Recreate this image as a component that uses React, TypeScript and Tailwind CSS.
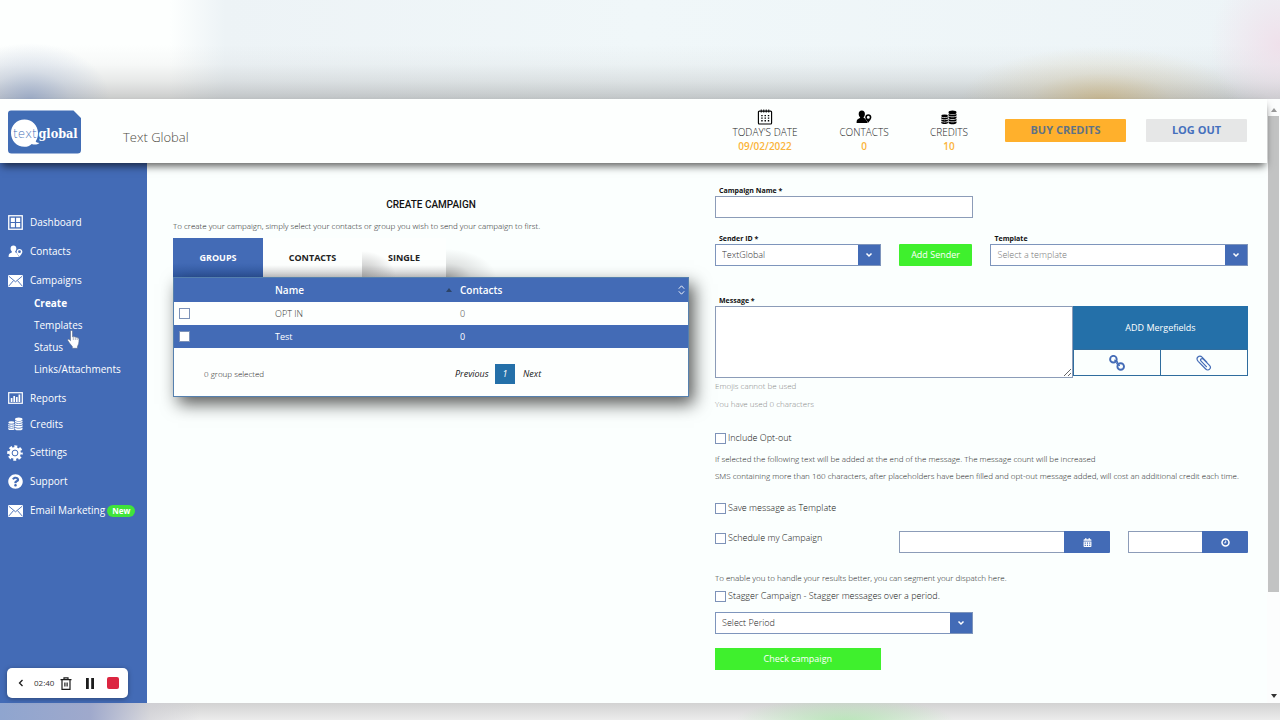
import React from "react";
import { FaQuestionCircle, FaCalendarAlt } from "react-icons/fa";

type IconProps = { className?: string };

function DashboardIcon({ className }: IconProps) {
  return (
    <svg viewBox="0 0 15 15" className={className} fill="none" aria-hidden="true">
      <rect x="0.75" y="0.75" width="13.5" height="13.5" stroke="currentColor" strokeWidth="1.3" />
      <path d="M2.8 2.8h4.100v4.100h-4.100zM8.100 2.800h4.100v4.100h-4.100zM2.800 8.100h4.100v4.100h-4.100zM8.100 8.100h4.100v4.100h-4.100z" fill="currentColor" />
    </svg>
  );
}

function ContactsIcon({ className }: IconProps) {
  return (
    <svg viewBox="0 0 16 14" className={className} fill="currentColor" aria-hidden="true">
      <path d="M5.8.6c2 0 3.1 1.4 3.1 3.3 0 1.4-.6 2.7-1.4 3.4.2.7.8 1 1.700 1.400l2.300 3.400v.9H.6c0-2.400.3-3.400 1.600-4 1.100-.5 1.900-.8 2-1.700-.9-.7-1.500-2-1.500-3.400C2.700 2 3.800.6 5.800.6z" />
      <path
        fillRule="evenodd"
        d="M12.300 4.200c1.800 0 3.100 1.300 3.100 3 0 1.900-1.700 3.300-3.100 5.500-1.400-2.200-3.100-3.600-3.100-5.500 0-1.700 1.300-3 3.100-3zm0 1.500a1.500 1.500 0 1 0 0 3 1.500 1.500 0 0 0 0-3z"
      />
    </svg>
  );
}

function EnvelopeIcon({ className }: IconProps) {
  return (
    <svg viewBox="0 0 15 12" className={className} fill="none" aria-hidden="true">
      <rect width="15" height="12" rx="1" fill="currentColor" />
      <path d="M0.800 1.200l6.700 5.600 6.700-5.600M0.800 11l4.700-5.400M14.200 11L9.500 5.600" stroke="#436bb6" strokeWidth="0.9" />
    </svg>
  );
}

function ReportsIcon({ className }: IconProps) {
  return (
    <svg viewBox="0 0 15 12" className={className} fill="none" aria-hidden="true">
      <rect x="0.7" y="0.700" width="13.600" height="10.600" stroke="currentColor" strokeWidth="1.200" />
      <path d="M3.600 10V6M6.200 10V4M8.800 10V5M11.400 10V2.600" stroke="currentColor" strokeWidth="1.700" />
    </svg>
  );
}

function CoinsIcon({ className }: IconProps) {
  return (
    <svg viewBox="0 0 16 15" className={className} fill="currentColor" aria-hidden="true">
      <ellipse cx="11.500" cy="2.400" rx="4" ry="1.900" />
      <path d="M7.500 3.700c1 1.400 7 1.400 8 0v1.700c-1 1.600-7 1.600-8 0zM7.500 6.200c1 1.400 7 1.400 8 0v1.700c-1 1.600-7 1.600-8 0zM7.500 8.700c1 1.400 7 1.400 8 0v1.700c-1 1.600-7 1.600-8 0zM7.500 11.200c1 1.400 7 1.400 8 0v1.800c-1 1.700-7 1.700-8 0z" />
      <ellipse cx="3.600" cy="5.900" rx="3.300" ry="1.400" />
      <path d="M.3 7.100c1 1.200 5.600 1.200 6.600 0v1.500c-1 1.300-5.600 1.300-6.600 0zM.3 9.300c1 1.200 5.600 1.200 6.600 0v1.500c-1 1.300-5.600 1.300-6.600 0zM.3 11.500c1 1.200 5.600 1.200 6.600 0v1.500c-1 1.300-5.600 1.300-6.600 0z" />
    </svg>
  );
}

function GearIcon({ className }: IconProps) {
  return (
    <svg viewBox="0 0 16 16" className={className} fill="none" aria-hidden="true">
      <circle cx="8" cy="8" r="6.500" stroke="currentColor" strokeWidth="2.600" strokeDasharray="2.900 2.205" strokeDashoffset="1.450" />
      <circle cx="8" cy="8" r="5.900" fill="currentColor" />
      <circle cx="8" cy="8" r="2.900" stroke="#436bb6" strokeWidth="1" />
    </svg>
  );
}

function PlannerIcon({ className }: IconProps) {
  return (
    <svg viewBox="0 0 16 17" className={className} fill="none" stroke="currentColor" aria-hidden="true">
      <rect x="1" y="2.200" width="14" height="13.800" rx="1" strokeWidth="1.200" />
      <path d="M4 .5v3.300M6.700 .5v3.300M9.300 .5v3.300M12 .5v3.300" strokeWidth="1" />
      <path d="M4 7h8.500M4 9.700h8.500M4 12.400h8.500" strokeWidth="1.500" strokeDasharray="1.500 2" />
    </svg>
  );
}

function ClockIcon({ className }: IconProps) {
  return (
    <svg viewBox="0 0 10 10" className={className} fill="none" stroke="currentColor" aria-hidden="true">
      <circle cx="5" cy="5" r="3.900" strokeWidth="1.700" />
      <path d="M5.200 2.800v2.500H3.500" strokeWidth="1" />
    </svg>
  );
}

function ChainIcon({ className }: IconProps) {
  return (
    <svg viewBox="0 0 16 16" className={className} fill="none" stroke="currentColor" aria-hidden="true">
      <circle cx="4.400" cy="4.200" r="3.300" strokeWidth="1.900" />
      <circle cx="11.700" cy="11.500" r="3.300" strokeWidth="1.900" />
      <path d="M5.300 5.100c2 .3 3.300 1.200 3.600 3.300M7.300 7.500c.5 1.800 1.800 2.900 3.600 3.200" strokeWidth="1.200" />
    </svg>
  );
}

function ClipIcon({ className }: IconProps) {
  return (
    <svg viewBox="0 0 16 16" className={className} fill="none" stroke="currentColor" strokeLinecap="round" aria-hidden="true">
      <path
        d="M10.800 7.200L6.300 2.300C4.900 .9 3 .9 1.900 2s-1 2.900.3 4.300l7.500 7.700c1.200 1.200 2.900 1.200 3.900.2s1-2.600-.1-3.800L7.200 4.100c-.7-.7-1.600-.7-2.200-.1s-.6 1.500.1 2.200l5.300 5.500"
        strokeWidth="1.200"
      />
    </svg>
  );
}

function ChevronDown({ className }: IconProps) {
  return (
    <svg viewBox="0 0 8 6" className={className} fill="none" stroke="currentColor" strokeWidth="1.500" aria-hidden="true">
      <path d="M1.500 1.500L4 4l2.500-2.500" />
    </svg>
  );
}

function Logo() {
  return (
    <svg viewBox="0 0 73 44" className="h-[44px] w-[73px]" role="img" aria-label="textglobal">
      <path d="M3 0.500H65.500L73 8V40a3.500 3.500 0 0 1-3.500 3.500H3.500A3.500 3.500 0 0 1 0 40V3.500A3 3 0 0 1 3 .5z" fill="#416db5" />
      <path d="M16.500 9.500c7.700 0 13.500 6 13.500 13.500 0 3.900-1 6.500-2.300 8.300.5 1 1.700 1.600 3.700 1.700-2.200 1.800-5.200 1.900-7.700.9-2 1.900-4.600 2.900-7.200 2.900C8.600 36.800 3 30.600 3 23S8.600 9.500 16.500 9.500z" fill="#fff" />
      <text x="5" y="27.500" fontFamily="'DejaVu Sans', sans-serif" fontWeight="200" fontSize="12" fill="#416db5">
        text
      </text>
      <text x="30.500" y="27.500" fontFamily="'DejaVu Serif Condensed', 'DejaVu Serif', serif" fontWeight="700" fontStretch="condensed" fontSize="12.500" fill="#fff">
        global
      </text>
    </svg>
  );
}

type Stat = { label: string; value: string; icon: React.ReactNode; width: string };

const stats: Stat[] = [
  { label: "TODAY'S DATE", value: "09/02/2022", icon: <PlannerIcon className="h-4 w-4" />, width: "w-[110px]" },
  { label: "CONTACTS", value: "0", icon: <ContactsIcon className="h-[14px] w-4" />, width: "w-[88px]" },
  { label: "CREDITS", value: "10", icon: <CoinsIcon className="h-[15px] w-4" />, width: "w-[82px]" },
];

function Header() {
  return (
    <header className="relative z-10 flex h-16 items-center bg-[#fdfffe] pl-2 pr-5 shadow-[0_5px_8px_-2px_rgba(0,0,0,0.65)]">
      <a href="#home" className="mt-0.5">
        <Logo />
      </a>
      <h1 className="ml-[42px] mt-3 text-[13px] font-light leading-5 text-[#4d4a3f]">Text Global</h1>
      <dl className="ml-auto mr-[15px] flex">
        {stats.map((s) => (
          <div key={s.label} className={`flex flex-col items-center ${s.width}`}>
            <div className="flex h-4 items-center justify-center text-black">{s.icon}</div>
            <dt className="whitespace-nowrap text-[10px] font-light leading-[14px] text-[#222]">{s.label}</dt>
            <dd className="text-[10px] font-semibold leading-[14px] text-[#fbb43a]">{s.value}</dd>
          </div>
        ))}
      </dl>
      <div className="mb-0.5 flex gap-5">
        <button className="h-[23px] w-[121px] rounded-[1px] bg-[#ffb02c] text-[11px] font-bold text-[#5f7385]">BUY CREDITS</button>
        <button className="h-[23px] w-[101px] rounded-[1px] bg-[#e6e7e7] text-[11px] font-bold text-[#4570bd]">LOG OUT</button>
      </div>
    </header>
  );
}

type NavItem = { label: string; icon: React.ReactNode; height: string; badge?: string; sub?: string[] };

const nav: NavItem[] = [
  { label: "Dashboard", icon: <DashboardIcon className="size-[15px]" />, height: "h-[29px]" },
  { label: "Contacts", icon: <ContactsIcon className="h-[13px] w-[15px]" />, height: "h-[29px]" },
  {
    label: "Campaigns",
    icon: <EnvelopeIcon className="h-3 w-[15px]" />,
    height: "h-[29px]",
    sub: ["Create", "Templates", "Status", "Links/Attachments"],
  },
  { label: "Reports", icon: <ReportsIcon className="h-3 w-[15px]" />, height: "h-[24px]" },
  { label: "Credits", icon: <CoinsIcon className="h-[14px] w-[15px]" />, height: "h-[28px]" },
  { label: "Settings", icon: <GearIcon className="size-4" />, height: "h-[29px]" },
  { label: "Support", icon: <FaQuestionCircle className="size-[15px]" />, height: "h-[29px]" },
  { label: "Email Marketing", icon: <EnvelopeIcon className="h-3 w-[15px]" />, height: "h-[29px]", badge: "New" },
];

function Sidebar() {
  return (
    <nav className="w-[147px] shrink-0 bg-[#436bb6] pt-[45px] text-[10px] text-white">
      <ul>
        {nav.map((item) => (
          <li key={item.label}>
            <a href={`#${item.label}`} className={`flex items-center pl-[7px] ${item.height}`}>
              <span className="flex w-4 justify-center">{item.icon}</span>
              <span className="ml-[7px] whitespace-nowrap">{item.label}</span>
              {item.badge && (
                <span className="ml-[2px] rounded-full bg-[#3fe43a] px-[5px] text-[8px] font-bold leading-3">{item.badge}</span>
              )}
            </a>
            {item.sub && (
              <ul className="-mt-[3px] mb-[6px]">
                {item.sub.map((s) => (
                  <li key={s}>
                    <a href={`#${s}`} className={`flex h-[22px] items-center pl-[34px] ${s === "Create" ? "font-bold" : ""}`}>
                      {s}
                    </a>
                  </li>
                ))}
              </ul>
            )}
          </li>
        ))}
      </ul>
    </nav>
  );
}

function Check({ id }: { id: string }) {
  return (
    <input
      id={id}
      type="checkbox"
      className="block size-[11px] shrink-0 appearance-none border border-[#7d92b8] bg-white checked:bg-[#436bb6]"
    />
  );
}

const groups = [
  { name: "OPT IN", contacts: 0, active: false },
  { name: "Test", contacts: 0, active: true },
];

function GroupsPanel() {
  return (
    <section>
      <h2 className="mt-[35px] text-center font-['Roboto',sans-serif] text-[10px] font-medium leading-[14px] text-[#111]">
        CREATE CAMPAIGN
      </h2>
      <p className="mt-2 whitespace-nowrap text-[8px] font-light leading-3 text-[#222]">
        To create your campaign, simply select your contacts or group you wish to send your campaign to first.
      </p>
      <div role="tablist" className="mt-[6px] flex h-[39px] text-[9px] font-bold text-[#222]">
        <button role="tab" aria-selected="true" className="w-[90px] bg-[linear-gradient(to_top,#2f57a0,#436bb6_14px)] text-white">
          GROUPS
        </button>
        <button
          role="tab"
          aria-selected="false"
          className="w-[99px] bg-[linear-gradient(to_top,#d4d4d5,#fdfffe_12px)]"
        >
          CONTACTS
        </button>
        <button
          role="tab"
          aria-selected="false"
          className="w-[84px] bg-[radial-gradient(ellipse_34px_26px_at_0%_100%,#b5b5b5,transparent),linear-gradient(to_top,#d4d4d5,#fdfffe_12px)]"
        >
          SINGLE
        </button>
        <span className="flex-1 bg-[radial-gradient(ellipse_50px_28px_at_0%_100%,rgba(140,140,140,0.7),rgba(170,170,170,0.3)_50%,transparent)]" />
      </div>
      <div className="relative border border-[#5580ae] bg-[#fdfffe] shadow-[5px_7px_16px_rgba(0,0,0,0.65)]">
        <table className="w-full table-fixed text-left">
          <colgroup>
            <col className="w-[101px]" />
            <col />
            <col className="w-[228px]" />
          </colgroup>
          <thead>
            <tr className="h-[24px] bg-[#436bb6] text-[10px] text-white">
              <th aria-label="Select" />
              <th className="font-semibold">
                <div className="flex items-center justify-between pr-[8px]">
                  Name
                  <svg viewBox="0 0 6 4" className="h-1 w-1.5" fill="#2c4468" aria-hidden="true">
                    <path d="M0 4l3-4 3 4z" />
                  </svg>
                </div>
              </th>
              <th className="font-semibold">
                <div className="flex items-center justify-between pr-[3px]">
                  Contacts
                  <svg viewBox="0 0 7 10" className="h-[10px] w-[7px]" fill="none" stroke="#fff" strokeWidth="0.9" aria-hidden="true">
                    <path d="M.8 3.700l2.700-2.900 2.700 2.900M.8 6.300l2.700 2.900 2.700-2.900" />
                  </svg>
                </div>
              </th>
            </tr>
          </thead>
          <tbody>
            {groups.map((g) => (
              <tr
                key={g.name}
                className={
                  g.active ? "h-[23px] bg-[#436bb6] text-[9px] text-white" : "h-[23px] text-[9px] font-light text-[#333]"
                }
              >
                <td className="pl-[5px]">
                  <Check id={`group-${g.name}`} />
                </td>
                <td>
                  <label htmlFor={`group-${g.name}`}>{g.name}</label>
                </td>
                <td>{g.contacts}</td>
              </tr>
            ))}
          </tbody>
        </table>
        <div className="flex h-[48px] items-center pl-[30px] pt-1 text-[#222]">
          <span className="w-[251px] text-[8px] font-light">0 group selected</span>
          <div className="flex items-center gap-2 text-[9px] italic">
            <button className="w-8">Previous</button>
            <button className="size-5 bg-[#2470a9] text-[9px] italic text-white">1</button>
            <button>Next</button>
          </div>
        </div>
      </div>
    </section>
  );
}

function SelectBox({ id, value, className = "" }: { id: string; value: string; className?: string }) {
  return (
    <div className="relative">
      <select
        id={id}
        aria-label={value}
        className={`block h-[22px] w-full appearance-none border border-[#7e95bc] bg-white pl-[6px] text-[9px] font-light ${className}`}
      >
        <option>{value}</option>
      </select>
      <span className="pointer-events-none absolute inset-y-px right-px flex w-[22px] items-center justify-center bg-[#436bb6] text-white">
        <ChevronDown className="h-1.5 w-2" />
      </span>
    </div>
  );
}

function FieldLabel({ htmlFor, children }: { htmlFor: string; children: React.ReactNode }) {
  return (
    <label htmlFor={htmlFor} className="block pl-[4px] pt-0.5 text-[7px] font-bold leading-[10px] text-[#111]">
      {children}
    </label>
  );
}

function CheckLine({ id, children }: { id: string; children: React.ReactNode }) {
  return (
    <div className="flex h-[14px] items-center gap-[2px] text-[9px] font-light text-[#111]">
      <Check id={id} />
      <label htmlFor={id} className="whitespace-nowrap">
        {children}
      </label>
    </div>
  );
}

function CampaignForm() {
  return (
    <form className="pt-[21px]" onSubmit={(e) => e.preventDefault()}>
      <div className="grid grid-cols-12 items-end gap-x-[18px]">
        <div className="col-span-6">
          <FieldLabel htmlFor="campaign-name">Campaign Name *</FieldLabel>
          <input id="campaign-name" className="block h-[22px] w-full border border-[#8c9cb8] bg-white px-1.5 text-[9px]" />
        </div>
      </div>
      <div className="mt-[14px] grid grid-cols-12 items-end gap-x-[18px]">
        <div className="col-span-4">
          <FieldLabel htmlFor="sender">Sender ID *</FieldLabel>
          <SelectBox id="sender" value="TextGlobal" className="text-[#333]" />
        </div>
        <button type="button" className="col-span-2 h-[22px] rounded-[1px] bg-[#3ff02d] text-[9px] text-white">
          Add Sender
        </button>
        <div className="col-span-6">
          <FieldLabel htmlFor="template">Template</FieldLabel>
          <SelectBox id="template" value="Select a template" className="text-[#777]" />
        </div>
      </div>

      <div className="mt-[28px]">
        <FieldLabel htmlFor="message">Message *</FieldLabel>
        <div className="flex items-start">
          <textarea id="message" className="block h-[72px] min-w-0 flex-1 border border-[#8c9cb8] bg-white p-1.5 text-[9px]" />
          <div className="w-[175px]">
            <button type="button" className="block h-[43px] w-full bg-[#2470a9] text-[9px] text-white">
              ADD Mergefields
            </button>
            <div className="grid grid-cols-2 text-[#436bb6]">
              <button
                type="button"
                aria-label="Add link"
                className="flex h-[27px] items-center justify-center border border-[#2f6d9e]"
              >
                <ChainIcon className="size-4" />
              </button>
              <button
                type="button"
                aria-label="Add attachment"
                className="flex h-[27px] items-center justify-center border border-l-0 border-[#2f6d9e]"
              >
                <ClipIcon className="size-4" />
              </button>
            </div>
          </div>
        </div>
      </div>
      <div className="mt-[2px] text-[8px] font-light leading-3 text-[#888]">
        <p>Emojis cannot be used</p>
        <p className="mt-[6px]">You have used 0 characters</p>
      </div>

      <div className="mt-[21px]">
        <CheckLine id="opt-out">Include Opt-out</CheckLine>
      </div>
      <div className="mt-2 whitespace-nowrap text-[8px] font-light leading-3 text-[#222]">
        <p>If selected the following text will be added at the end of the message. The message count will be increased</p>
        <p className="mt-[5px]">
          SMS containing more than 160 characters, after placeholders have been filled and opt-out message added, will cost an
          additional credit each time.
        </p>
      </div>

      <div className="mt-[19px]">
        <CheckLine id="save-template">Save message as Template</CheckLine>
      </div>
      <div className="mt-4 grid grid-cols-12 gap-x-[18px]">
        <div className="col-span-4">
          <CheckLine id="schedule">Schedule my Campaign</CheckLine>
        </div>
        <div className="col-span-5 flex">
          <input aria-label="Date" className="h-[22px] min-w-0 flex-1 border border-r-0 border-[#8c9cb8] bg-white px-1.5 text-[9px]" />
          <button
            type="button"
            aria-label="Pick date"
            className="flex h-[22px] w-[46px] items-center justify-center rounded-r-[1px] bg-[#436bb6] text-white"
          >
            <FaCalendarAlt className="size-[9px]" />
          </button>
        </div>
        <div className="col-span-3 flex">
          <input aria-label="Time" className="h-[22px] min-w-0 flex-1 border border-r-0 border-[#8c9cb8] bg-white px-1.5 text-[9px]" />
          <button
            type="button"
            aria-label="Pick time"
            className="flex h-[22px] w-[46px] items-center justify-center rounded-r-[1px] bg-[#436bb6] text-white"
          >
            <ClockIcon className="size-[9px]" />
          </button>
        </div>
      </div>

      <p className="mt-[19px] whitespace-nowrap text-[8px] font-light leading-3 text-[#222]">
        To enable you to handle your results better, you can segment your dispatch here.
      </p>
      <div className="mt-[5px]">
        <CheckLine id="stagger">Stagger Campaign - Stagger messages over a period.</CheckLine>
      </div>
      <div className="mt-[9px] grid grid-cols-12 gap-x-[18px]">
        <div className="col-span-6">
          <SelectBox id="period" value="Select Period" className="text-[#222]" />
        </div>
      </div>
      <div className="mt-[14px] grid grid-cols-12 gap-x-[18px]">
        <button type="submit" className="col-span-4 h-[22px] bg-[#3ff02d] text-[9px] text-white">
          Check campaign
        </button>
      </div>
    </form>
  );
}

function Scrollbar() {
  return (
    <div className="flex w-[13px] shrink-0 flex-col items-center bg-[#fcfdfd]" aria-hidden="true">
      <svg viewBox="0 0 6 4" className="mb-1 mt-[9px] h-[4px] w-1.5 shrink-0" fill="#999">
        <path d="M0 4l3-4 3 4z" />
      </svg>
      <div className="w-[11px] flex-[475] bg-[#c2c3c3]" />
      <div className="flex-[102]" />
      <svg viewBox="0 0 6 4" className="mb-[5px] h-[4px] w-1.5 shrink-0" fill="#333">
        <path d="M0 0l3 4 3-4z" />
      </svg>
    </div>
  );
}

function RecorderBar() {
  return (
    <div className="absolute bottom-[5px] left-[7px] z-20 flex h-[30px] w-[121px] items-center rounded-[5px] bg-white text-[#1c1c1c] shadow-[0_1px_5px_rgba(0,0,0,0.35)]">
      <button aria-label="Back" className="ml-[11px]">
        <svg viewBox="0 0 6 8" className="block h-2 w-1.5" fill="none" stroke="currentColor" strokeWidth="1.300">
          <path d="M4.500 1L1.500 4l3 3" />
        </svg>
      </button>
      <span className="ml-[10px] w-[20px] whitespace-nowrap text-[8px] text-[#333]">02:40</span>
      <button aria-label="Delete recording" className="ml-[6px]">
        <svg viewBox="0 0 12 13" className="block h-[13px] w-3" fill="none" stroke="currentColor" strokeWidth="1.200">
          <path d="M.5 2.700h11M4 2.500V.8h4v1.700M2 2.700v9.600h8V2.700M4.900 5.500v4M7.100 5.500v4" />
        </svg>
      </button>
      <button aria-label="Pause" className="ml-[14px]">
        <svg viewBox="0 0 8 11" className="block h-[11px] w-2" fill="currentColor">
          <path d="M0 0h2.800v11H0zM5.200 0H8v11H5.200z" />
        </svg>
      </button>
      <button aria-label="Stop" className="ml-[13px] size-3 rounded-[2px] bg-[#dc2540]" />
    </div>
  );
}

function HandCursor() {
  return (
    <svg viewBox="0 0 13 20" className="pointer-events-none absolute left-[67px] top-[231px] z-20 h-5 w-[13px]" aria-hidden="true">
      <path
        d="M3.500 1.500c0-1.300 2-1.300 2 0v5.300l1.200-.3 1.800.5 1.800.5c1.200.2 1.700 1 1.700 2.200 0 3-.4 4.800-1.500 6.600v2H5.300v-1.800C3.600 14.800 2 12.300.8 10.600c-.6-1.200.6-1.900 1.500-1.100l1.200 1.200z"
        fill="#fff"
        stroke="#5a6a88"
        strokeWidth="0.600"
      />
      <path d="M6.300 7v3M8.300 7.300v2.700M10.200 7.700v2.300" stroke="#5a6a88" strokeWidth="0.500" />
    </svg>
  );
}

export default function App() {
  return (
    <div className="flex min-h-screen flex-col font-['Open_Sans',sans-serif]">
      <div className="h-[99px] shrink-0 bg-[radial-gradient(ellipse_80px_56px_at_30px_99px,rgba(125,148,192,0.6),rgba(125,148,192,0.22)_50%,transparent),radial-gradient(ellipse_140px_52px_at_86%_100%,rgba(200,165,90,0.5),rgba(205,175,110,0.18)_50%,transparent),radial-gradient(ellipse_70px_80px_at_100%_45%,rgba(240,220,232,0.8),transparent),linear-gradient(to_bottom,transparent_45%,rgba(150,150,150,0.06)_65%,rgba(130,130,130,0.18)_82%,rgba(110,110,110,0.35)),linear-gradient(to_right,#fdfffe_170px,#edf3f6_225px,#f0f7f9_50%,#edf4f7)]" />
      <div className="relative flex flex-1">
        <div className="flex min-w-0 flex-1 flex-col">
          <Header />
          <div className="flex flex-1 bg-[#fbfffe]">
            <Sidebar />
            <main className="grid min-w-0 flex-1 grid-cols-[516fr_533fr] items-start gap-x-[26px] pl-[26px] pr-[19px]">
              <GroupsPanel />
              <CampaignForm />
            </main>
          </div>
        </div>
        <Scrollbar />
        <RecorderBar />
        <HandCursor />
      </div>
      <div className="h-[17px] shrink-0 bg-[radial-gradient(ellipse_110px_24px_at_66%_110%,rgba(150,225,150,0.6),transparent),linear-gradient(to_right,#8fa5cf,#9fa9cc_90px,rgba(205,205,212,0.6)_150px,rgba(220,220,220,0)_200px),linear-gradient(to_bottom,#d2d2d2,#ececec)]" />
    </div>
  );
}
